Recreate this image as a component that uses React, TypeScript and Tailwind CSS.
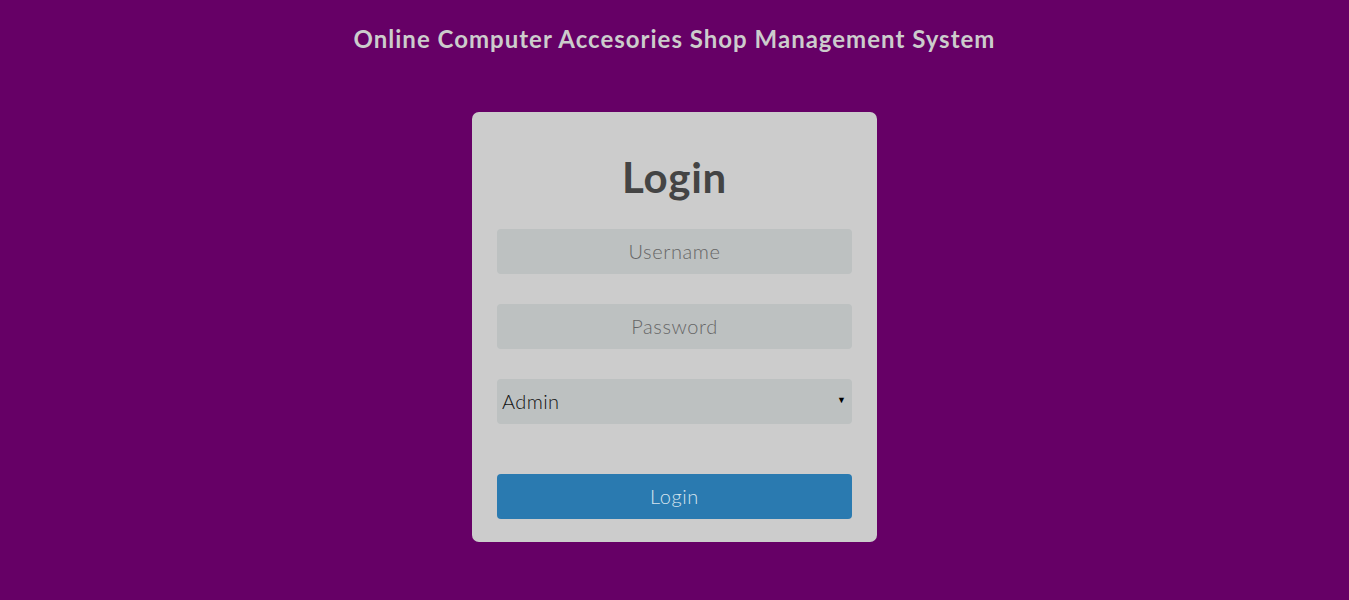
import React, { useState } from 'react';

const App: React.FC = () => {
  const [role, setRole] = useState('Admin');

  return (
    <div className="min-h-screen w-full bg-[#660066] font-['Lato',sans-serif]">
      {/* Title */}
      <header className="pt-[23px] text-center">
        <h1 className="text-[24px] font-bold leading-[32px] text-[#cccccc] tracking-[1px]">
          Online Computer Accesories Shop Management System
        </h1>
      </header>

      {/* Login card */}
      <main className="flex justify-center pt-[57px]">
        <form
          onSubmit={(e) => e.preventDefault()}
          className="w-[405px] rounded-[7px] bg-[#cccccc] px-[25px] pt-[40px] pb-[23px]"
        >
          <h2 className="text-center text-[42px] font-bold leading-[50px] tracking-[0.8px] text-[#444444]">Login</h2>

          <input
            type="text"
            placeholder="Username"
            className="mt-[27px] block h-[45px] w-full rounded-[4px] bg-[#bdc1c1] pb-[2px] text-center text-[20px] font-light tracking-[0.6px] text-[#333] outline-none placeholder:text-[#666666]"
          />
          <input
            type="password"
            placeholder="Password"
            className="mt-[30px] block h-[45px] w-full rounded-[4px] bg-[#bdc1c1] pb-[2px] text-center text-[20px] font-light tracking-[0.6px] text-[#333] outline-none placeholder:text-[#666666]"
          />

          <div className="relative mt-[30px]">
            <select
              value={role}
              onChange={(e) => setRole(e.target.value)}
              className="block h-[45px] w-full appearance-none rounded-[4px] bg-[#bdc1c1] pb-[2px] pl-[5px] text-[20px] font-light tracking-[0.4px] text-[#111] outline-none"
            >
              <option>Admin</option>
              <option>Employee</option>
            </select>
            <span className="pointer-events-none absolute right-[6px] top-[14px] text-[9px] text-black">▼</span>
          </div>

          <button
            type="submit"
            className="mt-[50px] block h-[45px] w-full rounded-[4px] bg-[#2a7ab0] pb-[2px] text-[20px] font-light tracking-[0.6px] text-[#d6e4ee]"
          >
            Login
          </button>
        </form>
      </main>
    </div>
  );
};

export default App;
